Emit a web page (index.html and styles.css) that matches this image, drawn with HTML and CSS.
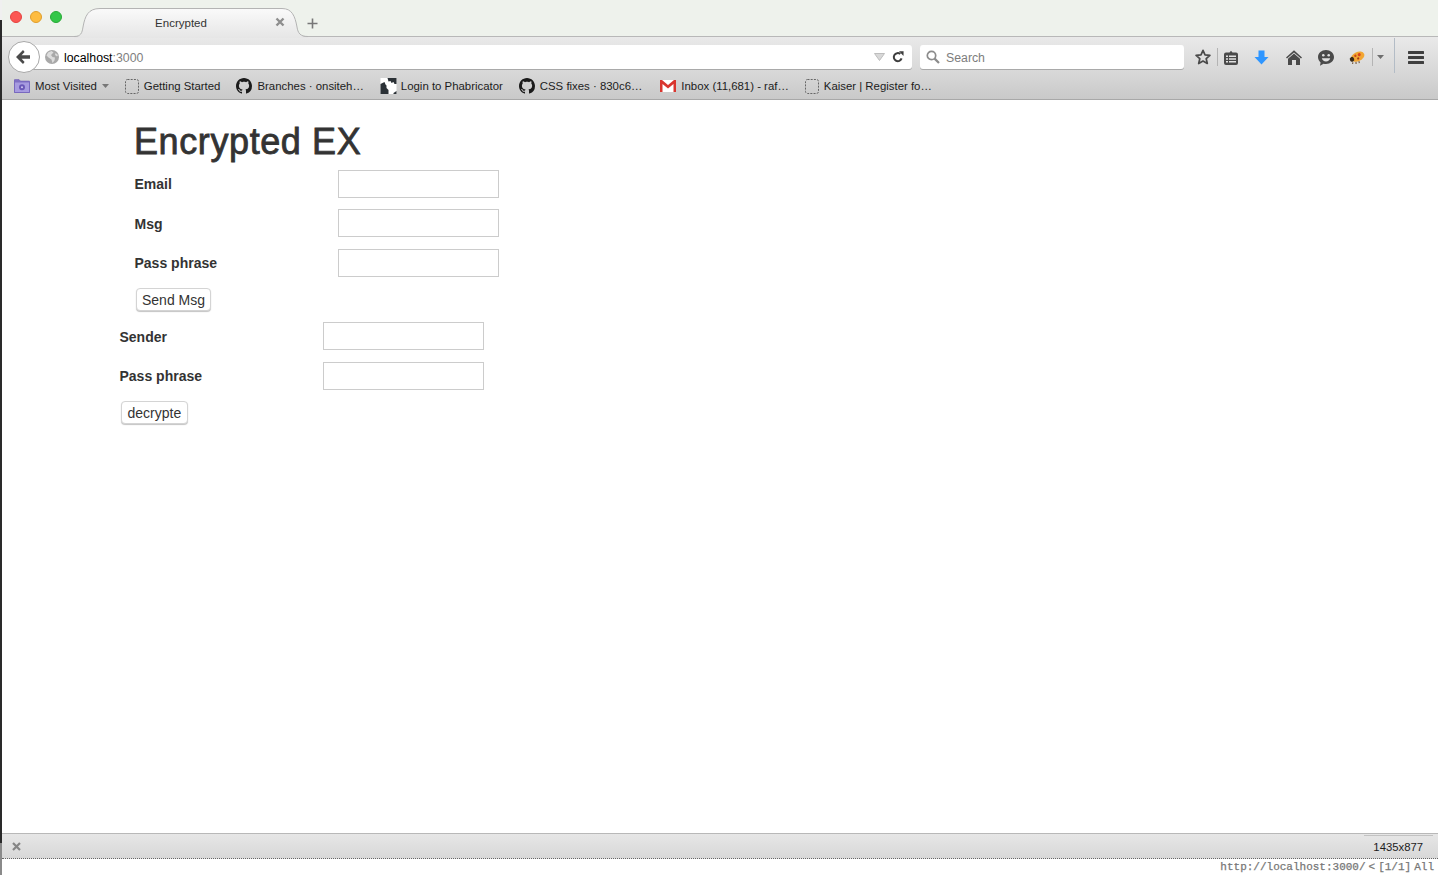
FILE: index.html
```html
<!DOCTYPE html>
<html lang="en">
<head>
<meta charset="utf-8">
<title>Encrypted</title>
<link rel="stylesheet" href="styles.css">
</head>
<body>
<svg class="defs" width="0" height="0" aria-hidden="true">
  <symbol id="gh" viewBox="0 0 16 16"><path d="M8 0C3.58 0 0 3.58 0 8c0 3.54 2.29 6.53 5.47 7.59.4.07.55-.17.55-.38 0-.19-.01-.82-.01-1.49-2.01.37-2.53-.49-2.69-.94-.09-.23-.48-.94-.82-1.13-.28-.15-.68-.52-.01-.53.63-.01 1.08.58 1.23.82.72 1.21 1.87.87 2.33.66.07-.52.28-.87.51-1.07-1.78-.2-3.64-.89-3.64-3.95 0-.87.31-1.59.82-2.15-.08-.2-.36-1.02.08-2.12 0 0 .67-.21 2.2.82.64-.18 1.32-.27 2-.27.68 0 1.36.09 2 .27 1.53-1.04 2.2-.82 2.2-.82.44 1.1.16 1.92.08 2.12.51.56.82 1.27.82 2.15 0 3.07-1.87 3.75-3.65 3.95.29.25.54.73.54 1.48 0 1.07-.01 1.93-.01 2.2 0 .21.15.46.55.38A8.013 8.013 0 0016 8c0-4.42-3.58-8-8-8z" fill="#1b1b1b"/></symbol>
  <symbol id="blank" viewBox="0 0 14 15"><rect x=".5" y=".5" width="13" height="14" rx="2" fill="none" stroke="#666" stroke-dasharray="2 1.2"/></symbol>
</svg>
<div class="window">
  <header class="titlebar">
    <div class="lights"><i class="light red"></i><i class="light yellow"></i><i class="light green"></i></div>
    <div class="tab">
      <svg class="tab-shape" width="234" height="30" viewBox="0 0 234 30" aria-hidden="true">
        <defs><linearGradient id="tabfill" x1="0" y1="0" x2="0" y2="1"><stop offset="0" stop-color="#fafafa"/><stop offset="1" stop-color="#e6e6e6"/></linearGradient></defs>
        <path d="M0 29C7 29 8 25 9 19 11 8 14 .5 26 .5H208C218 .5 221 8 223 19 224 25 226 29 234 29V30H0Z" fill="url(#tabfill)"/>
        <path d="M0 28.5C7 28.5 8 25 9 19 11 8 14 .5 26 .5H208C218 .5 221 8 223 19 224 25 226 28.5 234 28.5" fill="none" stroke="#b4b4b4"/>
      </svg>
      <span class="tab-title">Encrypted</span>
      <svg class="tab-close" width="10" height="10" viewBox="0 0 10 10" aria-hidden="true"><path d="M1.5 1.5l7 7M8.5 1.5l-7 7" stroke="#8e8e8e" stroke-width="2.4"/></svg>
    </div>
    <svg class="newtab" width="11" height="11" viewBox="0 0 11 11" aria-hidden="true"><path d="M5.5 .5v10M.5 5.5h10" stroke="#777" stroke-width="1.6"/></svg>
  </header>

  <nav class="navbar">
    <button class="back" type="button" aria-label="Back">
      <svg width="16" height="16" viewBox="0 0 16 16"><path d="M8 1 1 8l7 7 1.6-2-3-3.3H15V6.3H6.6l3-3.3Z" fill="#4a4a4a"/></svg>
    </button>
    <div class="urlbar">
      <svg class="globe" width="14" height="14" viewBox="0 0 14 14" aria-hidden="true"><circle cx="7" cy="7" r="7" fill="#a9a9a9"/><path d="M3 2.5 6.5 1l2 1.5L6 5 7.5 7 10 7.5 9.5 10.5 7.5 13 6.5 9.5 3.5 7.5 1.5 5.5ZM10.5 3 13 5 12 6.5 10 5Z" fill="#dcdcdc"/></svg>
      <span class="url">localhost<span class="port">:3000</span></span>
      <svg class="url-drop" width="11" height="8" viewBox="0 0 11 8" aria-hidden="true"><path d="M.5.5h10L5.5 7.5Z" fill="#d8d8d8" stroke="#bdbdbd"/></svg>
      <svg class="reload" width="12" height="12" viewBox="0 0 12 12" aria-hidden="true"><path d="M9.6 7.4A4 4 0 1 1 8.3 3" fill="none" stroke="#3d3d3d" stroke-width="2"/><path d="M7 .2 11.6.3 11.5 5Z" fill="#3d3d3d"/></svg>
    </div>
    <div class="searchbar">
      <svg width="14" height="14" viewBox="0 0 14 14" aria-hidden="true"><circle cx="5.5" cy="5.5" r="4.2" fill="none" stroke="#8c8c8c" stroke-width="1.7"/><path d="M8.6 8.6l4.4 4.4" stroke="#8c8c8c" stroke-width="2.2"/></svg>
      <span class="search-text">Search</span>
    </div>
    <div class="tools">
      <svg class="t-star" width="16" height="16" viewBox="0 0 16 16" aria-hidden="true"><path d="M8 1.4l2 4.5 4.9.5-3.7 3.3 1.1 4.8L8 12.1l-4.3 2.4 1.1-4.8L1.1 6.4 6 5.9Z" fill="none" stroke="#4a4a4a" stroke-width="1.7" stroke-linejoin="round"/></svg>
      <i class="sep s1"></i>
      <svg class="t-list" width="14" height="15" viewBox="0 0 14 15" aria-hidden="true"><path d="M2 2.5h3.5L7 .8l1.5 1.7H12a2 2 0 0 1 2 2V13a2 2 0 0 1-2 2H2a2 2 0 0 1-2-2V4.500a2 2 0 0 1 2-2Z" fill="#4a4a4a"/><path d="M2 5.500h2v1.500H2zM5 5.500h7v1.500H5zM2 8.300h2v1.500H2zM5 8.300h7v1.500H5zM2 11h2v1.500H2zM5 11h7v1.500H5z" fill="#e2e2e2"/></svg>
      <svg class="t-down" width="15" height="15" viewBox="0 0 15 15" aria-hidden="true"><path d="M4.500 .5h6v6.500h4L7.500 14.500.5 7h4Z" fill="#2f96ff"/></svg>
      <svg class="t-home" width="16" height="15" viewBox="0 0 16 15" aria-hidden="true"><path d="M8 .3 16 7.500l-1 1L8 2.500 1 8.500l-1-1Z" fill="#4a4a4a"/><path d="M8 3.600 14 8.800V15H10V10H6V15H2V8.800Z" fill="#4a4a4a"/></svg>
      <svg class="t-chat" width="16" height="16" viewBox="0 0 16 16" aria-hidden="true"><path d="M8 0c4.400 0 8 3 8 7s-3.600 7-8 7c-.9 0-1.700-.1-2.500-.3L2 15.700l.6-3.300C1 11.100 0 9.200 0 7 0 3 3.600 0 8 0Z" fill="#4a4a4a"/><circle cx="5.300" cy="5.300" r="1.300" fill="#e0e0e0"/><circle cx="10.700" cy="5.300" r="1.300" fill="#e0e0e0"/><path d="M3.800 8.200h8.400c-.4 2-2.100 3.200-4.200 3.200S4.200 10.200 3.800 8.200Z" fill="#e0e0e0"/></svg>
      <svg class="t-bug" width="16" height="14" viewBox="0 0 16 14" aria-hidden="true"><g transform="rotate(-25 8 7)"><ellipse cx="8.800" cy="7" rx="7" ry="4.600" fill="#f2a632"/><ellipse cx="2.500" cy="7" rx="2.200" ry="2.400" fill="#3a2a1a"/><circle cx="7" cy="5.200" r="1.200" fill="#c8481a"/><circle cx="11" cy="5.800" r="1.500" fill="#d8401c"/><circle cx="8.500" cy="8.800" r="1.100" fill="#a8381a"/><path d="M2 10 .5 12.500M5 11l-1 2.500M8 11.500l-.5 2" stroke="#6a4a2a"/></g></svg>
      <i class="sep s2"></i>
      <svg class="t-drop" width="7" height="4" viewBox="0 0 7 4" aria-hidden="true"><path d="M0 0h7L3.500 4Z" fill="#6e6e6e"/></svg>
      <i class="sep tall"></i>
      <svg class="t-menu" width="16" height="13" viewBox="0 0 16 13" aria-hidden="true"><path d="M1 0h14a1 1 0 0 1 0 3H1a1 1 0 0 1 0-3ZM1 5h14a1 1 0 0 1 0 3H1a1 1 0 0 1 0-3ZM1 10h14a1 1 0 0 1 0 3H1a1 1 0 0 1 0-3Z" fill="#3f3f3f"/></svg>
    </div>
  </nav>

  <div class="bookmarks">
    <a class="bm">
      <svg width="16" height="14" viewBox="0 0 16 14" aria-hidden="true"><path d="M0 1.500A1 1 0 0 1 1 .5h4l1.500 1.500H15a1 1 0 0 1 1 1V13a1 1 0 0 1-1 1H1a1 1 0 0 1-1-1Z" fill="#7f6fc4" stroke="#6a5ab0" stroke-width=".5"/><rect x="1" y="3.500" width="14" height="9.500" fill="#a79be0"/><circle cx="8" cy="8.200" r="3" fill="#6a58b8"/><circle cx="8" cy="8.200" r="1" fill="#cfc8f0"/></svg>
      <span>Most Visited</span>
      <svg class="bm-drop" width="7" height="4" viewBox="0 0 7 4" aria-hidden="true"><path d="M0 0h7L3.500 4Z" fill="#777"/></svg>
    </a>
    <a class="bm"><svg width="14" height="15"><use href="#blank"/></svg><span>Getting Started</span></a>
    <a class="bm"><svg width="16" height="16"><use href="#gh"/></svg><span>Branches · onsiteh…</span></a>
    <a class="bm tight-icon">
      <svg width="17" height="16" viewBox="0 0 16 16" aria-hidden="true"><rect width="16" height="16" fill="#fff"/><path d="M7 0h9v6h-2l-1-2-2 1-1-2-2 .5ZM0 6l4-2 1 2.500 1 1v2.500l2 2v4H0ZM13 15l3-2v3h-3Z" fill="#2b3136"/></svg>
      <span>Login to Phabricator</span>
    </a>
    <a class="bm"><svg width="16" height="16"><use href="#gh"/></svg><span>CSS fixes · 830c6…</span></a>
    <a class="bm bm-wide">
      <svg width="16" height="12" viewBox="0 0 16 12" aria-hidden="true"><rect width="16" height="12" fill="#fff"/><path d="M0 0h2l6 5 6-5h2v12h-2.500V4L8 8.500 2.500 4v8H0Z" fill="#d9362f"/></svg>
      <span>Inbox (11,681) - raf…</span>
    </a>
    <a class="bm"><svg width="14" height="15"><use href="#blank"/></svg><span>Kaiser | Register fo…</span></a>
  </div>

  <main class="content">
    <section class="form first">
      <h1>Encrypted EX</h1>
      <div class="rows tight">
        <label class="row"><span>Email</span><input type="text"></label>
        <label class="row nudge"><span>Msg</span><input type="text"></label>
        <label class="row"><span>Pass phrase</span><input type="text"></label>
      </div>
      <button class="btn" type="button">Send Msg</button>
    </section>
    <section class="form second">
      <div class="rows">
        <label class="row nudge"><span>Sender</span><input type="text"></label>
        <label class="row"><span>Pass phrase</span><input type="text"></label>
      </div>
      <button class="btn" type="button">decrypte</button>
    </section>
  </main>

  <footer class="findbar">
    <svg width="9" height="9" viewBox="0 0 9 9" aria-hidden="true"><path d="M1 1l7 7M8 1 1 8" stroke="#858585" stroke-width="2.200"/></svg>
    <span class="size">1435x877</span>
  </footer>
  <div class="status"><span>http://localhost:3000/</span><span>&lt;</span><span>[1/1]</span><span>All</span></div>
</div>
</body>
</html>
```

FILE: styles.css
```css
* { box-sizing: border-box; }
html, body { margin: 0; height: 100%; overflow: hidden; background: #fff; }
body { font-family: "Liberation Sans", Arial, sans-serif; }
.defs { position: absolute; }

.window {
  height: 875px;
  display: flex;
  flex-direction: column;
  padding-left: 2px;
  background: linear-gradient(to bottom, #f0f0f0 0, #f0f0f0 20px, #2a2a2a 20px, #2a2a2a 843px, #8a8a8a 843px);
}

/* Title bar */
.titlebar {
  height: 37px;
  flex: none;
  display: flex;
  align-items: flex-start;
  background: #eef2ec;
  border-bottom: 1px solid #b8b8b8;
}
.lights { display: flex; gap: 8px; padding: 11px 0 0 8px; width: 72px; flex: none; }
.light { width: 12px; height: 12px; border-radius: 50%; display: block; }
.red { background: #fc5753; border: 1px solid #e5433f; }
.yellow { background: #fdbc40; border: 1px solid #e09e2c; }
.green { background: #33c748; border: 1px solid #27aa35; }

.tab {
  position: relative;
  width: 234px;
  height: 29px;
  margin-top: 8px;
  flex: none;
  display: flex;
  align-items: center;
}
.tab-shape { position: absolute; left: 0; top: 0; }
.tab-title { position: relative; width: 214px; text-align: center; font-size: 11.5px; color: #333; margin-top: 1px; }
.tab-close { position: absolute; left: 201px; top: 9px; }
.newtab { margin: 18px 0 0 -1px; flex: none; }

/* Navigation bar */
.navbar {
  height: 33px;
  flex: none;
  display: flex;
  align-items: flex-start;
  padding: 8px 0 0 6px;
  background: linear-gradient(to bottom, #e9e9e9, #d9d9d9);
}
.back {
  position: relative;
  z-index: 2;
  width: 32px;
  height: 32px;
  margin-top: -4px;
  padding: 0 2px 0 0;
  flex: none;
  border-radius: 50%;
  border: 1px solid #a8a8a8;
  background: #fff;
  display: flex;
  align-items: center;
  justify-content: center;
}
.urlbar {
  width: 882px;
  height: 24px;
  margin-left: -10px;
  padding-left: 15px;
  flex: none;
  display: flex;
  align-items: center;
  background: #fff;
  border-radius: 0 3px 3px 0;
  box-shadow: 0 1px 0 #a9a9a9;
}
.globe { flex: none; }
.url { margin-left: 5px; padding-top: 2px; font-size: 12.3px; color: #000; flex: 1; }
.port { color: #808080; }
.url-drop { margin-right: 7px; }
.reload { margin-right: 8px; }
.searchbar {
  width: 264px;
  height: 24px;
  margin-left: 8px;
  padding-left: 6px;
  flex: none;
  display: flex;
  align-items: center;
  gap: 6px;
  background: #fff;
  border-radius: 3px;
  box-shadow: 0 1px 0 #a9a9a9;
  font-size: 12.3px;
  color: #7d7d7d;
}
.search-text { padding-top: 2px; }
.tools { position: relative; flex: none; display: flex; align-items: center; height: 24px; margin-left: 11px; }
.t-star { flex: none; }
.sep { display: block; flex: none; width: 1px; height: 18px; background: #b4b4b4; }
.s1 { margin: 0 6px 0 6px; }
.t-list { flex: none; }
.t-down { flex: none; margin-left: 16px; }
.t-home { flex: none; margin-left: 17px; }
.t-chat { flex: none; margin: 2px 0 0 16px; }
.t-bug { flex: none; margin-left: 15px; }
.s2 { margin-left: 7px; }
.t-drop { flex: none; margin-left: 4px; }
.tall { height: 35px; margin: 0 0 3px 10px; background: #b3bcc6; }
.t-menu { flex: none; margin-left: 13px; }

/* Bookmarks */
.bookmarks {
  height: 30px;
  flex: none;
  display: flex;
  align-items: center;
  gap: 16px;
  padding: 3px 0 0 12px;
  background: linear-gradient(to bottom, #d9d9d9, #c9c9c9);
  border-bottom: 1px solid #a8a8a8;
  font-size: 11.4px;
  color: #1c1c1c;
}
.bm { display: flex; align-items: center; gap: 5px; white-space: nowrap; flex: none; }
.tight-icon { gap: 4px; }
.bm-wide { margin-left: 2px; }

/* Page */
.content { flex: 1; min-height: 0; background: #fff; color: #333; }
.form { display: flex; flex-direction: column; align-items: flex-start; }
.first { padding-left: 132px; }
.second { padding: 11px 0 0 117px; }
h1 {
  margin: 20px 0 6px;
  font-size: 36px;
  line-height: 44px;
  font-weight: 400;
  letter-spacing: .6px;
  -webkit-text-stroke: .8px #333;
  color: #333;
}
.rows { display: flex; flex-direction: column; gap: 12px; }
.tight { gap: 11.4px; }
.row { display: flex; align-items: center; height: 28px; font-size: 14px; font-weight: 700; }
.row span { width: 204px; padding-left: .5px; }
.nudge span { padding-top: 2px; }
.row input { width: 161px; height: 28px; padding: 0; border: 1px solid #ccc; background: #fff; }
.btn {
  margin: 11px 0 0 2px;
  height: 23px;
  padding: 1px 5px 0;
  font: 14px "Liberation Sans", Arial, sans-serif;
  color: #333;
  background: #fff;
  border: 1px solid #d4d4d4;
  border-radius: 4px;
  box-shadow: 0 1px 1px #c4c4c4;
}
.second .btn { padding: 1px 5.5px 0; }

/* Bottom bars */
.findbar {
  height: 26px;
  flex: none;
  display: flex;
  align-items: center;
  justify-content: space-between;
  padding: 0 15px 0 10px;
  background: linear-gradient(to bottom, #e6e6e6, #d8d8d8);
  border-top: 1px solid #b8b8b8;
  border-bottom: 1px dotted #666;
  font-size: 11.3px;
  color: #1c1c1c;
}
.size { position: relative; align-self: stretch; display: flex; align-items: center; padding-top: 1px; }
.size::before {
  content: "";
  position: absolute;
  top: 1px;
  right: -10px;
  width: 69px;
  height: 1px;
  background: #c2c2c2;
}
.status {
  height: 16px;
  flex: none;
  display: flex;
  justify-content: flex-end;
  align-items: center;
  gap: 3px;
  padding-right: 4px;
  background: #fff;
  font: 400 11px "Liberation Mono", "Courier New", monospace;
  -webkit-text-stroke: .25px #777;
  color: #777;
}
```
